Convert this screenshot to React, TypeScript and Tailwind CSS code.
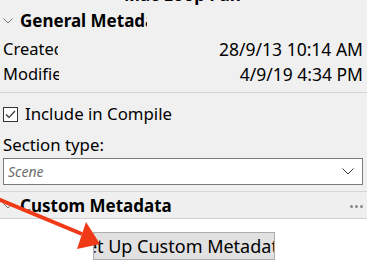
import React from "react";

const Chevron = () => (
  <svg width="10" height="6" viewBox="0 0 10 6" className="shrink-0">
    <path d="M0.5 0.5 L5 5 L9.5 0.5" fill="none" stroke="#707070" strokeWidth="1" />
  </svg>
);

export default function App() {
  return (
    <div
      className="relative w-[367px] h-[275px] overflow-hidden bg-[#f0f0f0] text-black"
      style={{ fontFamily: '"Segoe UI", "Noto Sans", sans-serif' }}
    >
      <div className="h-[6px] relative">
        <div className="absolute left-[124px] top-[-15px] text-[17px] font-bold leading-[20px] whitespace-nowrap">Mac Loop Fun</div>
      </div>
      {/* General Metadata header */}
      <div className="h-[30px] flex items-center pl-[3px]">
        <Chevron />
        <div className="ml-[7px] w-[127px] overflow-hidden whitespace-nowrap text-[17px] font-bold leading-[22px]">
          General Metadata
        </div>
      </div>
      <div className="h-[26px] flex items-center justify-between pl-[3px] pr-[4px] text-[16.5px]">
        <div className="w-[55px] overflow-hidden whitespace-nowrap">Created</div>
        <div className="text-[17.5px]">28/9/13 10:14 AM</div>
      </div>
      <div className="h-[25px] flex items-center justify-between pl-[3px] pr-[4px] text-[16.5px]">
        <div className="w-[56px] overflow-hidden whitespace-nowrap">Modified</div>
        <div className="text-[17.5px]">4/9/19 4:34 PM</div>
      </div>
      <div className="mt-[5px] h-px bg-[#d5d5d5]" />
      <div className="h-[38px] flex items-center pl-[3px] pt-[4px]">
        <div className="w-[15px] h-[15px] border border-[#333] bg-white flex items-center justify-center">
          <svg width="11" height="9" viewBox="0 0 11 9">
            <path d="M1 4.5 L4 7.5 L10 1" fill="none" stroke="#333" strokeWidth="1.2" />
          </svg>
        </div>
        <div className="ml-[7px] text-[16.8px]">Include in Compile</div>
      </div>
      <div className="h-[27px] flex items-center pl-[3px] text-[16.8px]">Section type:</div>
      <div className="mx-[3px] mr-[4px] h-[27px] border border-[#7a7a7a] bg-white flex items-center justify-between pl-[4px] pr-[8px]">
        <div className="text-[14px] italic text-[#6d6d6d]">Scene</div>
        <svg width="12" height="7" viewBox="0 0 12 7">
          <path d="M0.5 0.5 L6 6 L11.5 0.5" fill="none" stroke="#333" strokeWidth="1" />
        </svg>
      </div>
      <div className="mt-[6px] h-px bg-[#d5d5d5]" />
      {/* Custom Metadata header */}
      <div className="h-[27px] flex items-center pl-[3px] pr-[4px] pt-[2px] bg-[#efefef] border-b border-[#d0d0d0]">
        <Chevron />
        <div className="ml-[7px] text-[17px] font-bold leading-[22px]">Custom Metadata</div>
        <div className="ml-auto flex gap-[2px]">
          <div className="w-[3px] h-[3px] rounded-full bg-[#888]" />
          <div className="w-[3px] h-[3px] rounded-full bg-[#888]" />
          <div className="w-[3px] h-[3px] rounded-full bg-[#888]" />
        </div>
      </div>
      <div className="bg-white h-[60px] pt-[13px] pl-[93px]">
        <div className="w-[182px] h-[28px] border border-[#adadad] bg-[#e1e1e1] overflow-hidden flex items-center justify-start">
          <div className="whitespace-nowrap text-[18px] ml-[-17px]">Set Up Custom Metadata</div>
        </div>
      </div>
      {/* Red arrow annotation */}
      <svg className="absolute left-0 top-0" width="367" height="275" viewBox="0 0 367 275">
        <line x1="-2" y1="199" x2="82" y2="234" stroke="#f03a17" strokeWidth="4" />
        <polygon points="100,244 77,249 86,222" fill="#f03a17" />
      </svg>
    </div>
  );
}
